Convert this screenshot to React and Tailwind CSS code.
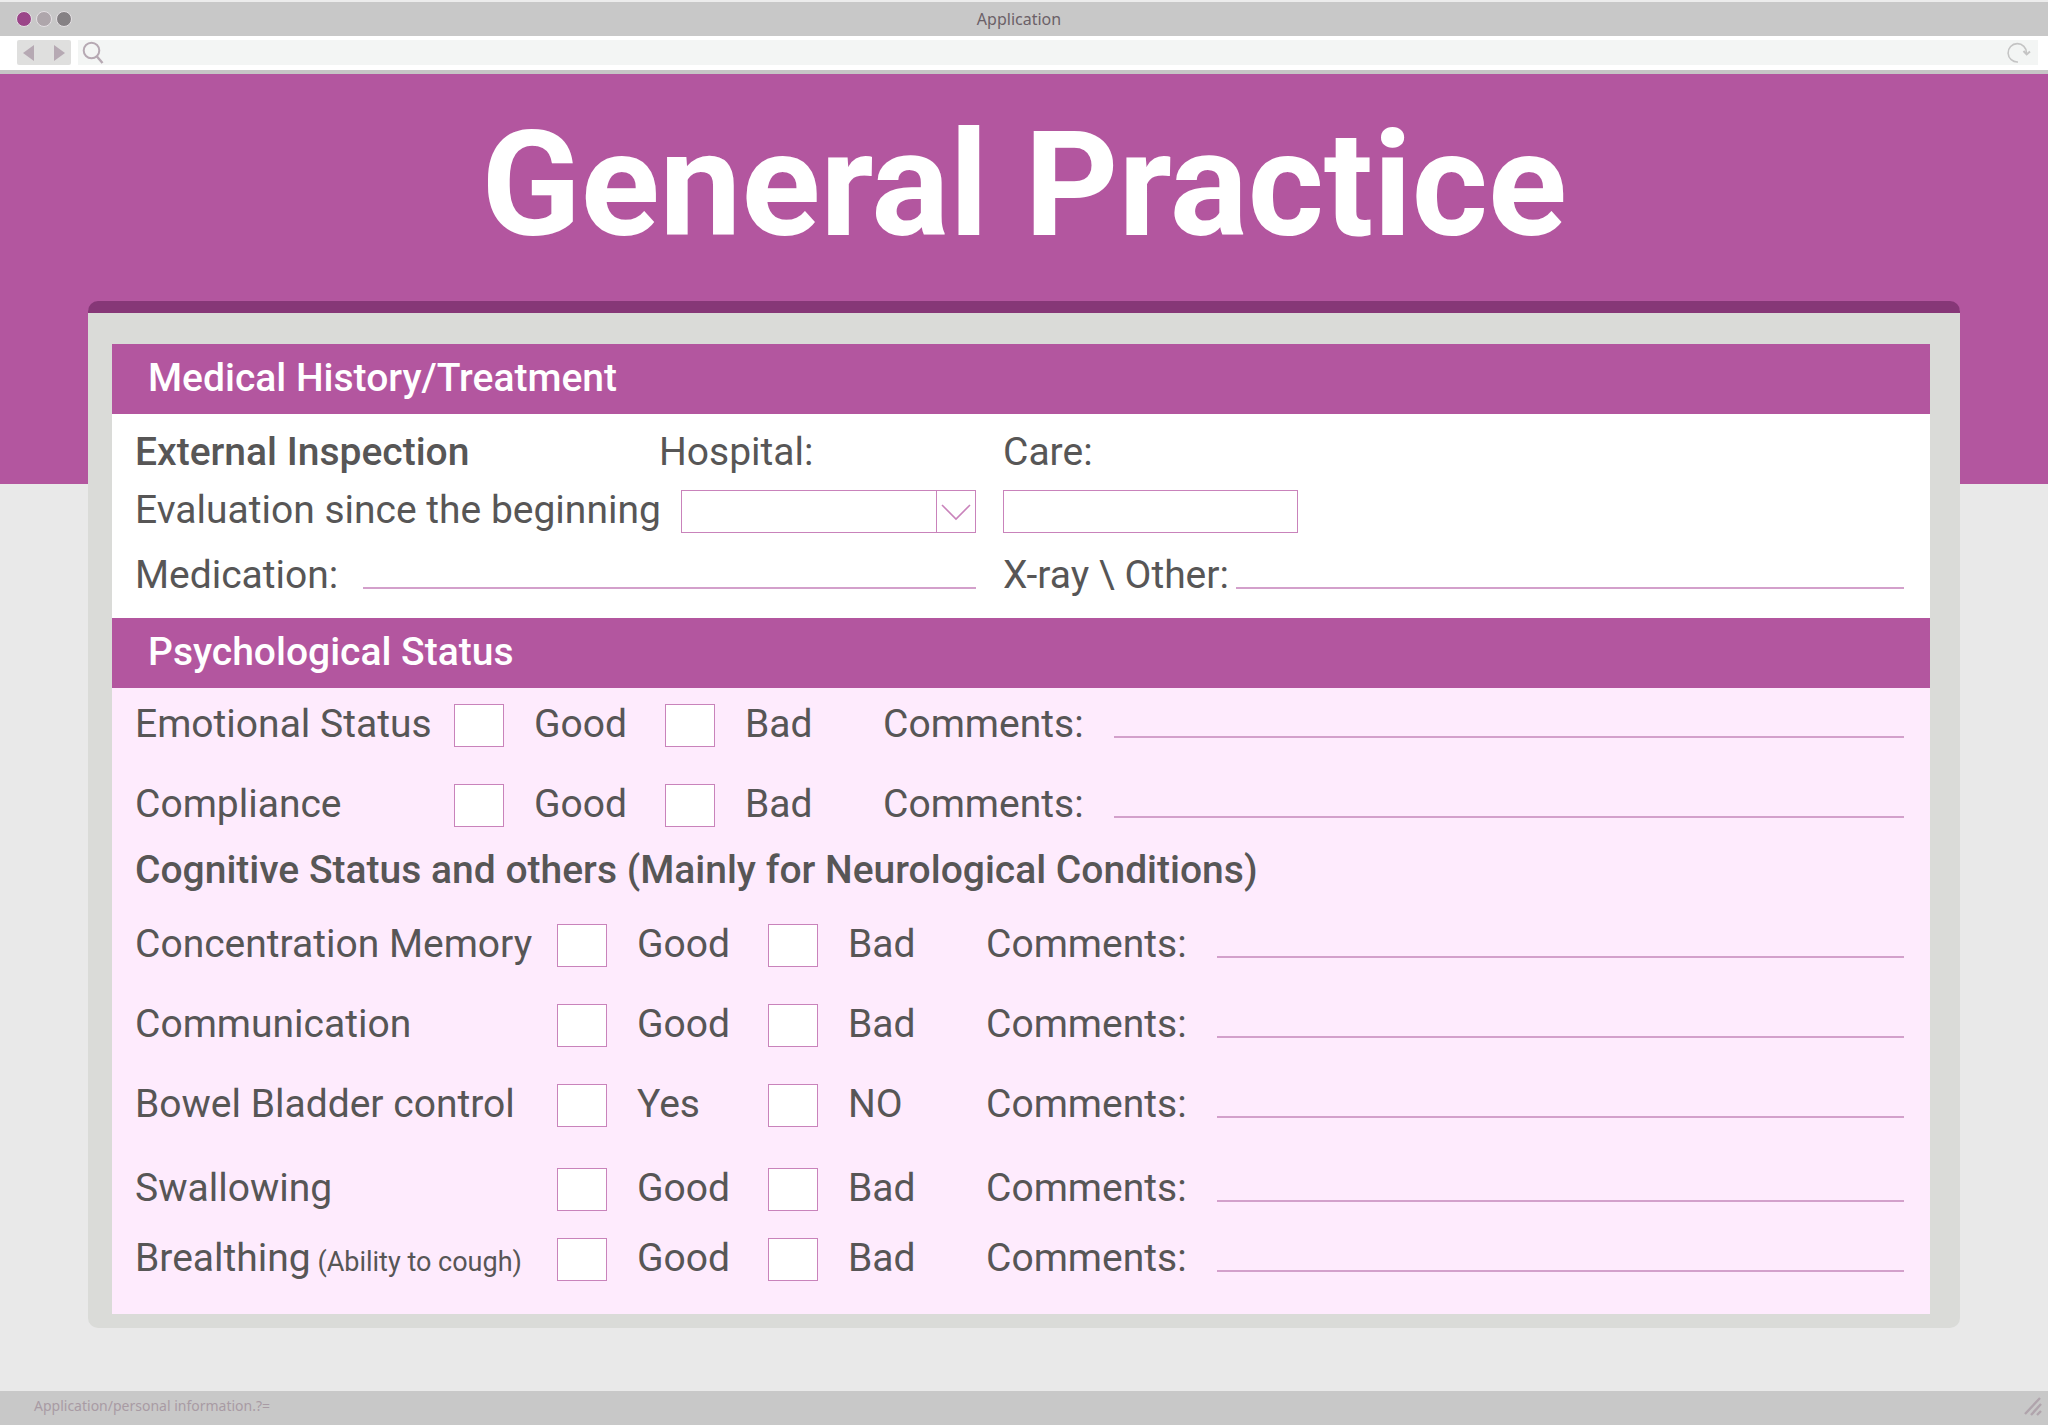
const psychRows = [
    { label: "Emotional Status", options: ["Good", "Bad"], space: "mb-[37px]" },
    { label: "Compliance", options: ["Good", "Bad"], space: "mb-[23px]" },
];

const cognitiveRows = [
    { label: "Concentration Memory", options: ["Good", "Bad"], space: "mb-[37px]" },
    { label: "Communication", options: ["Good", "Bad"], space: "mb-[37px]" },
    { label: "Bowel Bladder control", options: ["Yes", "NO"], space: "mb-[41px]" },
    { label: "Swallowing", options: ["Good", "Bad"], space: "mb-[27px]" },
    { label: "Brealthing", note: "(Ability to cough)", options: ["Good", "Bad"], space: "" },
];

const SectionHeader = ({ children }) => (
    <h2 className="bg-[#b3569f] pt-[14px] pb-4 pl-9 font-medium text-white">{children}</h2>
);

const LineInput = ({ id }) => (
    <input
        id={id}
        type="text"
        className="h-[34px] min-w-0 flex-1 border-b-2 border-[#d3a0cb] bg-transparent px-1 text-2xl outline-none"
    />
);

const StatusRow = ({ row, labelWidth }) => {
    const id = row.label.toLowerCase().replaceAll(" ", "-");
    return (
        <div role="group" aria-labelledby={id} className={`flex h-[43px] items-start ${row.space}`}>
            <div id={id} className={`shrink-0 whitespace-nowrap ${labelWidth}`}>
                {row.label}
                {row.note && <span className="text-[27px]"> {row.note}</span>}
            </div>
            {row.options.map((option, i) => (
                <label key={option} className={`flex shrink-0 items-start gap-[30px] ${i === 0 ? "w-[211px]" : "w-[218px]"}`}>
                    <input
                        type="checkbox"
                        className="h-[43px] w-[50px] shrink-0 appearance-none border border-[#c983bb] bg-white checked:bg-[#b3569f]"
                    />
                    {option}
                </label>
            ))}
            <label htmlFor={`${id}-comments`} className="w-[231px] shrink-0">Comments:</label>
            <LineInput id={`${id}-comments`} />
        </div>
    );
};

const TitleBar = () => (
    <div className="flex h-9 items-center border-t-2 border-[#ececec] bg-[#c8c8c8] pr-[26px] pl-4">
        <div className="flex flex-1 gap-1">
            <span className="h-4 w-4 rounded-full border border-[#e4e0e3] bg-[#9b4589]" />
            <span className="h-4 w-4 rounded-full border border-[#e4e0e3] bg-[#aea6ab]" />
            <span className="h-4 w-4 rounded-full border border-[#e4e0e3] bg-[#858184]" />
        </div>
        <span className="text-base leading-5 text-[#6b6067]">Application</span>
        <div className="flex-1" />
    </div>
);

const Toolbar = () => (
    <div className="flex h-[38px] items-center gap-[7px] border-b-4 border-[#c6c6c6] bg-white pr-[10px] pb-px pl-[17px]">
        <div className="flex h-[25px] w-[54px] items-center justify-between rounded-xs bg-[#dfdfde] px-1.5">
            <button type="button" aria-label="Back">
                <svg width="11" height="16" viewBox="0 0 11 16" fill="#b6a9b3"><path d="M11 0v16L0 8z" /></svg>
            </button>
            <button type="button" aria-label="Forward">
                <svg width="11" height="16" viewBox="0 0 11 16" fill="#b6a9b3"><path d="M0 0v16l11-8z" /></svg>
            </button>
        </div>
        <div className="flex h-[25px] flex-1 items-center bg-[#f3f5f4] pr-[7px] pl-1">
            <svg width="22" height="23" viewBox="0 0 22 23" fill="none" stroke="#b6a9b3" strokeWidth="2">
                <circle cx="9.5" cy="9.5" r="7.8" />
                <path d="M14.5 15l6 7" strokeWidth="2.4" />
            </svg>
            <input aria-label="Address" type="text" className="h-full min-w-0 flex-1 bg-transparent px-2 text-base outline-none" />
            <button type="button" aria-label="Reload">
                <svg width="24" height="22" viewBox="0 0 24 22" fill="none" stroke="#c4c4c4" strokeWidth="1.6">
                    <path d="M11 20A9.2 9.2 0 1 1 19.5 11" />
                    <path d="M16.5 9l3.2 3.4L23 9.6" strokeWidth="2" />
                </svg>
            </button>
        </div>
    </div>
);

export default function App() {
    return (
        <div className="flex min-h-screen flex-col bg-[#e9e9e9] font-['Noto_Sans',sans-serif]">
            <TitleBar />
            <Toolbar />

            {/* Banner */}
            <header className="h-[410px] bg-[#b3569f] pt-8 text-center font-['Roboto',sans-serif]">
                <h1 className="text-[146px] leading-[160px] font-bold text-white">General Practice</h1>
            </header>

            {/* Form */}
            <main className="mx-[88px] -mt-[183px] mb-[63px] overflow-hidden rounded-[10px] border-t-[12px] border-[#863777] bg-[#dadbd8] pt-[31px] pr-[30px] pb-[14px] pl-6 font-['Roboto',sans-serif] text-[39px] leading-10 text-[#575656]">
                <form>
                    <section className="bg-white">
                        <SectionHeader>Medical History/Treatment</SectionHeader>
                        <div className="grid grid-cols-[841px_1fr] gap-x-[27px] pt-[18px] pr-[26px] pb-[23px] pl-[23px]">
                            <div className="flex justify-between">
                                <h3 className="font-medium">External Inspection</h3>
                                <label htmlFor="hospital" className="w-[317px]">Hospital:</label>
                            </div>
                            <label htmlFor="care">Care:</label>

                            <div className="mt-[18px] flex justify-between">
                                <label htmlFor="hospital">Evaluation since the beginning</label>
                                <div className="relative h-[43px] w-[295px]">
                                    <select id="hospital" className="block h-full w-full appearance-none border border-[#c983bb] bg-white px-2 text-2xl">
                                        <option></option>
                                    </select>
                                    <span className="pointer-events-none absolute inset-y-0 right-0 flex w-10 items-center justify-center border border-[#c983bb]">
                                        <svg width="30" height="18" viewBox="0 0 30 18" fill="none" stroke="#c983bb" strokeWidth="1.6">
                                            <path d="M1 2l14 14L29 2" />
                                        </svg>
                                    </span>
                                </div>
                            </div>
                            <input id="care" type="text" className="mt-[18px] h-[43px] w-[295px] border border-[#c983bb] bg-white px-2 text-2xl outline-none" />

                            <div className="mt-[22px] flex">
                                <label htmlFor="medication" className="w-[228px]">Medication:</label>
                                <LineInput id="medication" />
                            </div>
                            <div className="mt-[22px] flex">
                                <label htmlFor="xray" className="w-[233px]">X-ray \ Other:</label>
                                <LineInput id="xray" />
                            </div>
                        </div>
                    </section>

                    <section className="bg-[#feebfd]">
                        <SectionHeader>Psychological Status</SectionHeader>
                        <div className="pt-4 pr-[26px] pb-[33px] pl-[23px]">
                            {psychRows.map((row) => (
                                <StatusRow key={row.label} row={row} labelWidth="w-[319px]" />
                            ))}
                            <h3 className="mb-[34px] font-medium">Cognitive Status and others (Mainly for Neurological Conditions)</h3>
                            {cognitiveRows.map((row) => (
                                <StatusRow key={row.label} row={row} labelWidth="w-[422px]" />
                            ))}
                        </div>
                    </section>
                </form>
            </main>

            {/* Status bar */}
            <footer className="mt-auto flex h-[34px] items-center justify-between bg-[#c8c8c8] pr-[6px] pb-1 pl-[34px]">
                <span className="text-sm text-[#a89ba4]">Application/personal information.?=</span>
                <svg width="18" height="19" viewBox="0 0 18 19" fill="none" stroke="#b0a4ac" strokeWidth="2.4">
                    <path d="M1 17L16 1M7 18L17 7M13 18l4-4" />
                </svg>
            </footer>
        </div>
    );
}
